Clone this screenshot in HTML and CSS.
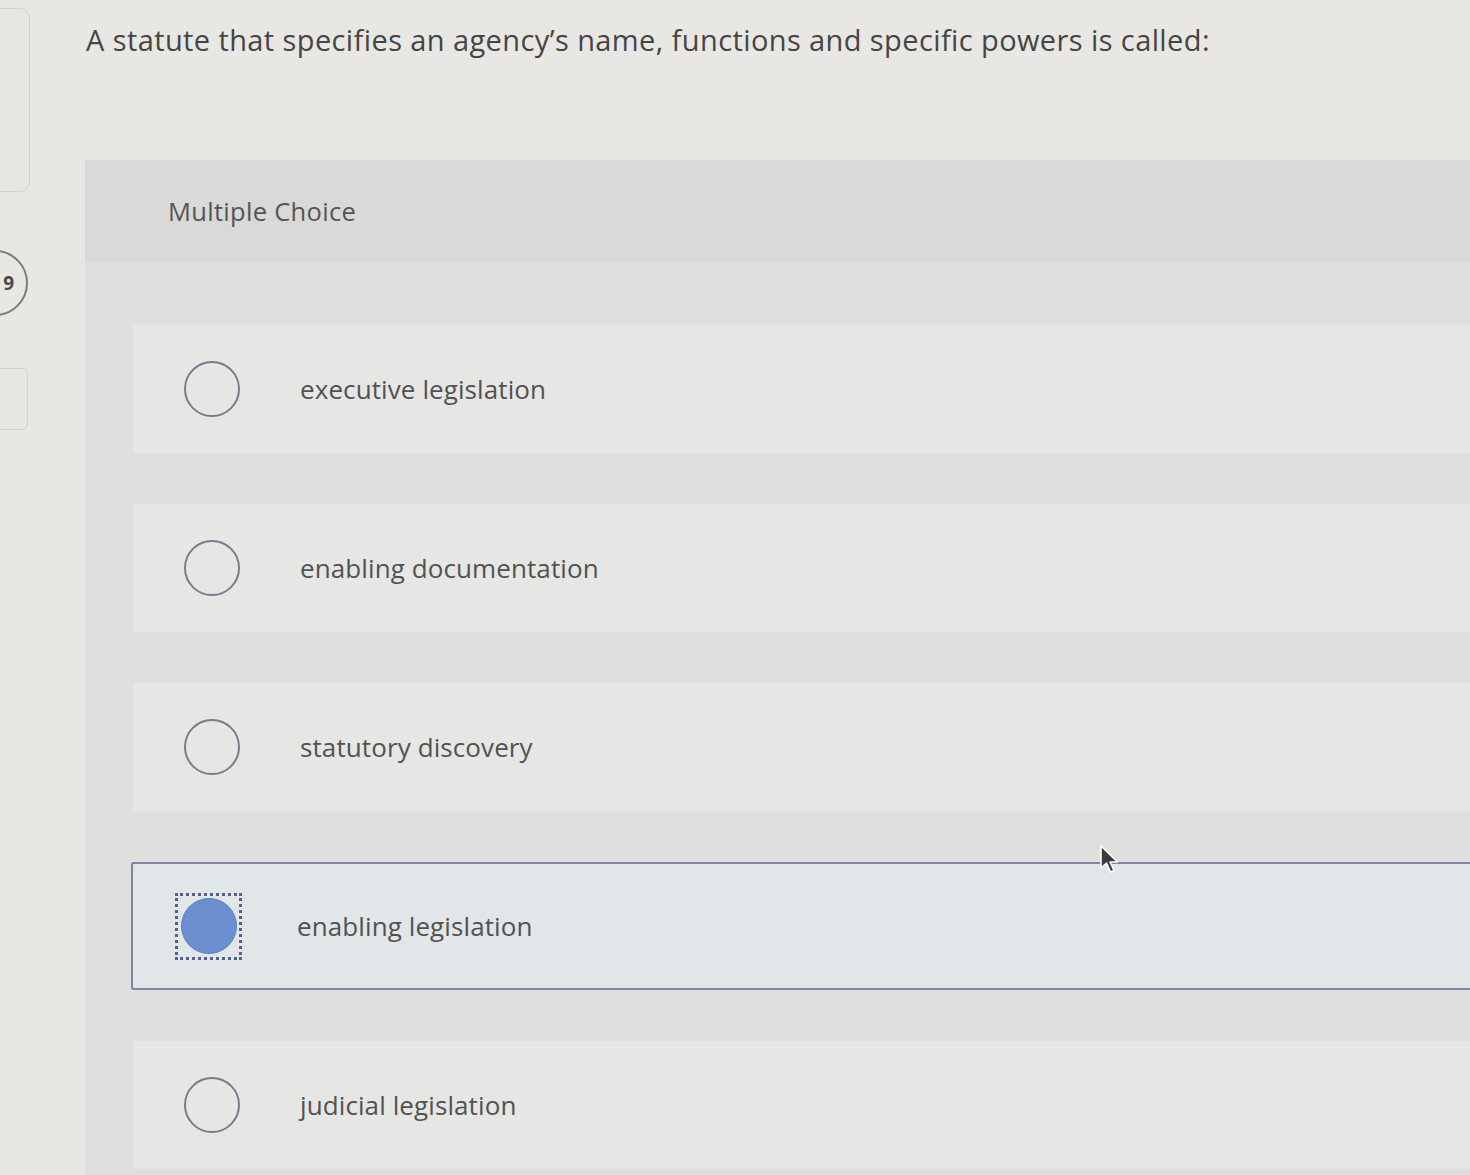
FILE: index.html
```html
<!DOCTYPE html>
<html lang="en">
<head>
<meta charset="utf-8">
<title>Multiple Choice</title>
<link rel="stylesheet" href="styles.css">
</head>
<body>
<div class="page">
  <aside class="sidebar">
    <div class="side-box side-box-top"></div>
    <div class="side-badge"><span>9</span></div>
    <div class="side-box side-box-small"></div>
  </aside>
  <main class="main">
    <h1 class="question">A statute that specifies an agency’s name, functions and specific powers is called:</h1>
    <section class="panel">
      <div class="panel-head">Multiple Choice</div>
      <div class="options">
        <div class="option"><span class="radio"></span><span class="label">executive legislation</span></div>
        <div class="option"><span class="radio"></span><span class="label">enabling documentation</span></div>
        <div class="option"><span class="radio"></span><span class="label">statutory discovery</span></div>
        <div class="option selected"><span class="focus"><span class="radio filled"></span></span><span class="label">enabling legislation</span>
          <svg class="cursor" width="22" height="32" viewBox="0 0 22 32"><path d="M2 2 L2 24 L7.5 19 L11.5 28 L15 26.5 L11 18 L18.5 18 Z" fill="#3a3a3a" stroke="#ffffff" stroke-width="1.6" stroke-linejoin="round"/></svg>
        </div>
        <div class="option"><span class="radio"></span><span class="label">judicial legislation</span></div>
      </div>
    </section>
  </main>
</div>
</body>
</html>
```
FILE: styles.css
```css
html, body {
  margin: 0;
  padding: 0;
}
body {
  background: #e8e7e4;
  font-family: "Open Sans", Lato, "Liberation Sans", sans-serif;
  color: #4a4a4a;
  width: 1470px;
  height: 1175px;
  overflow: hidden;
}
.page {
  display: flex;
  height: 1175px;
}
.sidebar {
  width: 85px;
  flex: 0 0 85px;
  display: flex;
  flex-direction: column;
  overflow: hidden;
}
.side-box {
  border: 1.5px solid #d3d2cf;
  border-radius: 10px;
  margin-left: -40px;
}
.side-box-top {
  margin-top: 8px;
  width: 68px;
  height: 182px;
}
.side-badge {
  margin-top: 58px;
  margin-left: -38px;
  width: 66px;
  height: 66px;
  border: 2px solid #7d7d7d;
  border-radius: 50%;
  display: flex;
  align-items: center;
  justify-content: flex-end;
  box-sizing: border-box;
}
.side-badge span {
  font-size: 19px;
  font-weight: 700;
  color: #4a4a4a;
  margin-right: 12px;
}
.side-box-small {
  margin-top: 52px;
  width: 66px;
  height: 60px;
  border-radius: 6px;
}
.main {
  flex: 1;
  display: flex;
  flex-direction: column;
  min-width: 0;
}
.question {
  margin: 21px 0 0 1px;
  font-size: 29px;
  font-weight: 400;
  letter-spacing: 0.4px;
  line-height: 38px;
  color: #454545;
  white-space: nowrap;
}
.panel {
  margin-top: 101px;
  background: #e0dfdd;
  flex: 1;
}
.panel-head {
  height: 102px;
  background: #dad9d7;
  display: flex;
  align-items: center;
  padding-left: 83px;
  font-size: 25.5px;
  letter-spacing: 0.3px;
  color: #555555;
  box-sizing: border-box;
}
.options {
  display: flex;
  flex-direction: column;
  gap: 51px;
  padding: 63px 0 0 48px;
}
.option {
  position: relative;
  height: 128px;
  background: #e6e6e4;
  display: flex;
  align-items: center;
  padding-left: 51px;
  box-sizing: border-box;
}
.radio {
  width: 56px;
  height: 56px;
  border: 2px solid #7b7b8c;
  border-radius: 50%;
  box-sizing: border-box;
  flex: 0 0 auto;
}
.label {
  margin-left: 60px;
  font-size: 26px;
  letter-spacing: 0.1px;
  color: #525252;
}
.option.selected {
  background: #e1e6e8;
  border: 2px solid #7e84a6;
  border-right: none;
  border-radius: 3px 0 0 3px;
  margin-left: -2px;
  padding-left: 42px;
}
.focus {
  width: 67px;
  height: 67px;
  border: 3px dotted #56608a;
  box-sizing: border-box;
  display: flex;
  align-items: center;
  justify-content: center;
}
.radio.filled {
  width: 56px;
  height: 56px;
  background: #6c8fcf;
  border: 1.5px solid #5e7fbd;
}
.focus + .label {
  margin-left: 55px;
}
.cursor {
  position: absolute;
  left: 966px;
  top: -20px;
}
```
